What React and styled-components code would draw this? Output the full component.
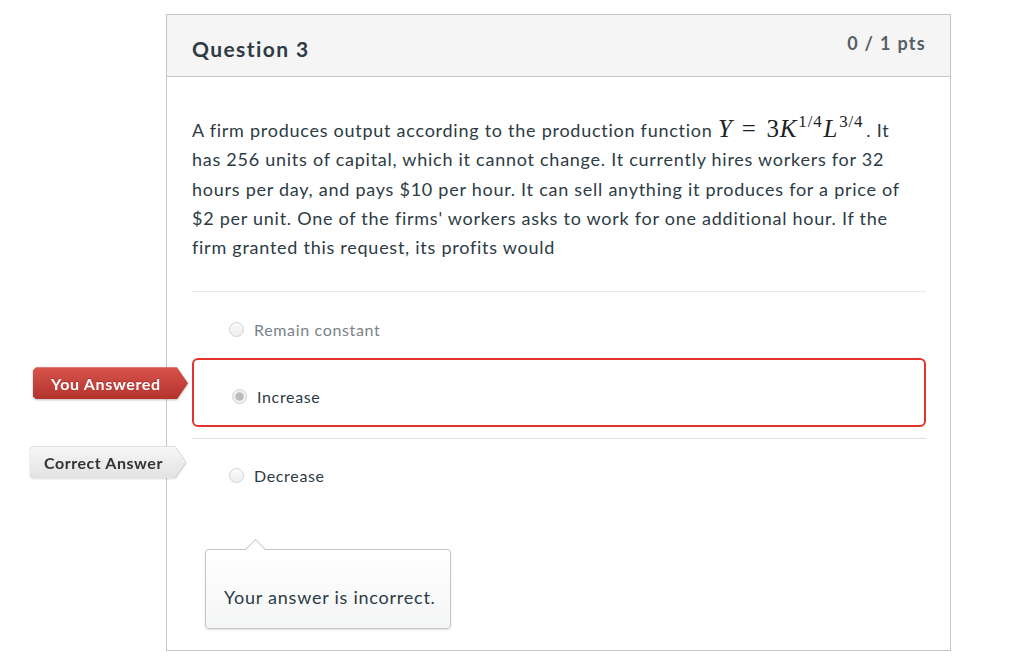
import styled, { createGlobalStyle } from 'styled-components';

const GlobalStyle = createGlobalStyle`
  html, body {
    margin: 0;
    padding: 0;
    background: #fff;
  }
  body {
    font-family: Lato, "Open Sans", "Liberation Sans", sans-serif;
    color: #2d3b45;
    letter-spacing: 0.74px;
  }
`;

const answers = [
  { id: 'a', text: 'Remain constant', state: 'muted' },
  { id: 'b', text: 'Increase', state: 'selected', tag: 'You Answered' },
  { id: 'c', text: 'Decrease', state: 'correct', tag: 'Correct Answer' },
];

const App = () => {
  return (
    <Page>
      <GlobalStyle />
      <Card>
        <Header>
          <Title>Question 3</Title>
          <Points>0 / 1 pts</Points>
        </Header>
        <Body>
          <Prompt>
            A firm produces output according to the production function{' '}
            <Math>
              <i>Y</i>
              <Eq>=</Eq>3<i>K</i>
              <Sup>1/4</Sup>
              <i>L</i>
              <Sup>3/4</Sup>
            </Math>
            . It
            <br />
            has 256 units of capital, which it cannot change. It currently hires workers for 32
            <br />
            hours per day, and pays $10 per hour. It can sell anything it produces for a price of
            <br />
            $2 per unit. One of the firms' workers asks to work for one additional hour. If the
            <br />
            firm granted this request, its profits would
          </Prompt>

          <AnswerList>
            {answers.map((a) => (
              <Answer key={a.id} $state={a.state}>
                {a.tag && (
                  <TagWrap $variant={a.state}>
                    <Tag $variant={a.state}>{a.tag}</Tag>
                  </TagWrap>
                )}
                <Radio $checked={a.state === 'selected'} />
                <AnswerText $state={a.state}>{a.text}</AnswerText>
              </Answer>
            ))}
          </AnswerList>

          <Feedback>Your answer is incorrect.</Feedback>
        </Body>
      </Card>
    </Page>
  );
};

const Page = styled.div`
  padding: 14px 0 20px 166px;
`;

const Card = styled.div`
  width: 785px;
  box-sizing: border-box;
  border: 1px solid #c3c7ca;
  background: #fff;
`;

const Header = styled.div`
  display: flex;
  justify-content: space-between;
  align-items: flex-start;
  height: 62px;
  box-sizing: border-box;
  padding: 0 24px 0 25px;
  background: #f5f5f5;
  border-bottom: 1px solid #c3c7ca;
`;

const Title = styled.h2`
  margin: 21px 0 0;
  font-size: 21px;
  font-weight: 700;
  color: #2d3b45;
  letter-spacing: 1.4px;
`;

const Points = styled.div`
  margin-top: 17px;
  font-size: 18px;
  font-weight: 700;
  color: #555f66;
  letter-spacing: 1.3px;
`;

const Body = styled.div`
  padding: 39px 24px 21px 25px;
`;

const Prompt = styled.p`
  margin: 0;
  font-size: 18px;
  line-height: 29.25px;
  color: #2d3b45;
  padding-bottom: 29px;
  border-bottom: 1px solid #e6e8ea;
`;

const Math = styled.span`
  font-family: "Liberation Serif", "DejaVu Serif", serif;
  font-size: 25px;
  line-height: 0;
  color: #222;
  white-space: nowrap;
  letter-spacing: 0.8px;
  margin-right: 2px;

  i {
    font-style: italic;
  }
`;

const Eq = styled.span`
  margin: 0 10px 0 9px;
`;

const Sup = styled.sup`
  font-size: 17px;
  font-style: normal;
  vertical-align: 10px;
  line-height: 0;
  margin: 0 1px 0 1px;
`;

const AnswerList = styled.div`
  display: flex;
  flex-direction: column;
`;

const Answer = styled.div`
  position: relative;
  display: flex;
  align-items: center;
  box-sizing: border-box;
  border-radius: 6px;
  ${({ $state }) =>
    $state === 'selected'
      ? `
    height: 69px;
    border: 2px solid #e2342a;
    padding: 8px 0 0 38px;
    margin-bottom: 11px;
  `
      : $state === 'correct'
      ? `
    height: 73px;
    border-top: 1px solid #dfe2e4;
    border-radius: 0;
    padding: 1px 0 0 37px;
  `
      : `
    height: 66px;
    padding: 9px 0 0 37px;
  `}
`;

const Radio = styled.span`
  width: 15px;
  height: 15px;
  border-radius: 50%;
  box-sizing: border-box;
  border: 1px solid #cfd3d6;
  background: ${({ $checked }) =>
    $checked
      ? 'radial-gradient(circle, #b9bcbe 0 3.8px, #f0f0f0 4.6px)'
      : 'linear-gradient(#fafafa, #eceeef)'};
  margin-right: 10px;
  flex-shrink: 0;
`;

const AnswerText = styled.span`
  font-size: 16px;
  letter-spacing: 0.66px;
  color: ${({ $state }) => ($state === 'muted' ? '#7b8287' : '#2d3b45')};
`;

const TagWrap = styled.div`
  position: absolute;
  top: 7px;
  left: ${({ $variant }) => ($variant === 'selected' ? '-161px' : '-162px')};
  filter: ${({ $variant }) =>
    $variant === 'selected'
      ? 'drop-shadow(0 1px 1px rgba(0,0,0,0.25))'
      : 'drop-shadow(0 0 0.6px rgba(0,0,0,0.55)) drop-shadow(0 1px 1px rgba(0,0,0,0.15))'};
`;

const Tag = styled.div`
  width: ${({ $variant }) => ($variant === 'selected' ? '155px' : '156px')};
  height: 32px;
  box-sizing: border-box;
  padding-left: ${({ $variant }) => ($variant === 'selected' ? '18px' : '14px')};
  display: flex;
  align-items: center;
  font-size: 16px;
  font-weight: 700;
  letter-spacing: ${({ $variant }) => ($variant === 'selected' ? '0.66px' : '0.55px')};
  clip-path: polygon(3px 0, calc(100% - 11px) 0, 100% 50%, calc(100% - 11px) 100%, 3px 100%, 0 calc(100% - 3px), 0 3px);
  ${({ $variant }) =>
    $variant === 'selected'
      ? `
    color: #fff;
    background: linear-gradient(#d8544d, #b3332c);
    text-shadow: 0 -1px 0 rgba(0,0,0,0.2);
  `
      : `
    color: #333;
    background: linear-gradient(#f8f8f8, #e2e2e2);
  `}
`;

const Feedback = styled.div`
  position: relative;
  margin: 38px 0 0 13px;
  width: 246px;
  height: 80px;
  box-sizing: border-box;
  display: flex;
  align-items: center;
  padding: 16px 0 0 18px;
  font-size: 18px;
  letter-spacing: 0.76px;
  color: #2d3b45;
  border: 1px solid #c3c7ca;
  border-radius: 4px;
  background: linear-gradient(#ffffff, #f4f5f6);
  box-shadow: 0 1px 2px rgba(0, 0, 0, 0.12);

  &::before {
    content: '';
    position: absolute;
    top: -8px;
    left: 42px;
    width: 14px;
    height: 14px;
    background: #fff;
    border-left: 1px solid #c3c7ca;
    border-top: 1px solid #c3c7ca;
    transform: rotate(45deg);
  }
`;

export default App;
